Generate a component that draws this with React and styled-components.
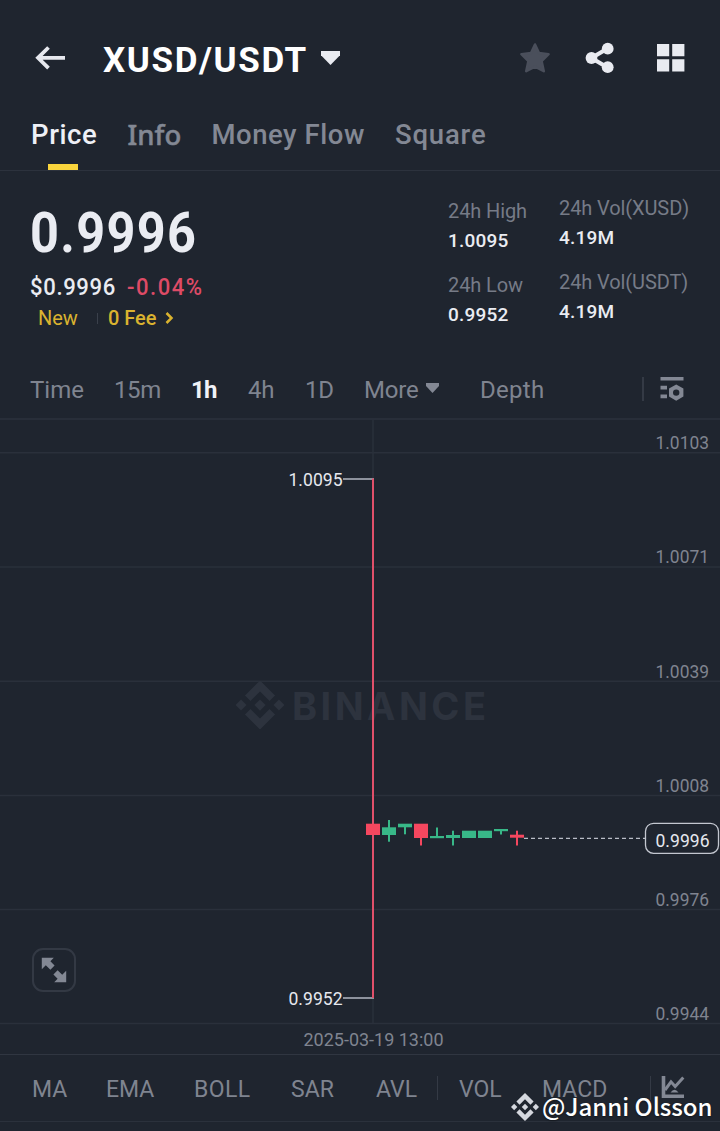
import React, { useState } from "react";
import styled, { createGlobalStyle } from "styled-components";

const GlobalStyle = createGlobalStyle`
  * {
    box-sizing: border-box;
  }
  body {
    margin: 0;
    background: #1f252f;
    font-family: Roboto, "Liberation Sans", sans-serif;
  }
  svg {
    display: block;
  }
`;

const Screen = styled.main`
  position: relative;
  width: 720px;
  height: 1131px;
  overflow: hidden;
  background: #1f252f;
  color: #eaecf2;
`;

const Header = styled.header`
  display: flex;
  align-items: center;
  height: 116px;
  padding: 0 35px 0 34px;
`;

const Pair = styled.h1`
  flex: 1;
  display: flex;
  align-items: center;
  gap: 13px;
  margin: 0;
  padding: 5px 0 0 37px;
  color: #fff;
  font-size: 35px;
  font-weight: 700;
  line-height: 40px;
  letter-spacing: 1.6px;

  svg {
    margin-top: -5px;
  }
`;

const HeaderIcons = styled.div`
  display: flex;
  align-items: center;
  gap: 34px;

  svg:last-child {
    margin-left: 8px;
  }
`;

const Tabs = styled.nav`
  display: flex;
  gap: 30px;
  height: 55px;
  padding-left: 31px;
  border-bottom: 1px solid #2c323d;
`;

const Tab = styled.a`
  position: relative;
  padding-top: 1px;
  font-family: ${(p) => (p.$slab ? '"Noto Sans", sans-serif' : "inherit")};
  font-size: 27.5px;
  font-weight: 500;
  line-height: 36px;
  letter-spacing: ${(p) => p.$track}px;
  color: ${(p) => (p.$active ? "#eef0f6" : "#838894")};
  -webkit-text-stroke: ${(p) => (p.$slab ? "0.5px" : "0")};

  &::after {
    content: "";
    display: ${(p) => (p.$active ? "block" : "none")};
    position: absolute;
    left: 17px;
    bottom: 0;
    width: 30px;
    height: 6px;
    background: #f9d43c;
  }
`;

const Summary = styled.section`
  display: flex;
  height: 189px;
`;

const PriceColumn = styled.div`
  width: 448px;
  padding: 32px 0 0 30px;
`;

const LastPrice = styled.div`
  font-size: 56px;
  font-weight: 700;
  line-height: 60px;
  letter-spacing: 1.5px;
  transform: scaleX(0.9);
  transform-origin: left;
`;

const Change = styled.div`
  display: flex;
  gap: 12px;
  margin-top: 8px;
  font-size: 24px;
  font-weight: 500;
  line-height: 32px;
  letter-spacing: 0.7px;
  transform: scaleX(0.92);
  transform-origin: left;

  em {
    font-style: normal;
    letter-spacing: 1.65px;
    color: #dd4b66;
  }
`;

const Tags = styled.div`
  display: flex;
  align-items: center;
  margin-top: 2px;
  padding-left: 8px;
  font-size: 20px;
  line-height: 26px;
  color: #dab32f;

  i {
    width: 1px;
    height: 11px;
    margin: 0 10px 0 19px;
    background: #3a404b;
  }
  b {
    margin-right: 9px;
    font-weight: 500;
  }
`;

const StatColumn = styled.dl`
  width: 111px;
  margin: 0;
  padding-top: ${(p) => p.$top}px;
  white-space: nowrap;
`;

const StatName = styled.dt`
  font-size: 20px;
  line-height: 24px;
  letter-spacing: -0.1px;
  color: #767b87;
`;

const StatValue = styled.dd`
  margin: 6px 0 20px;
  font-size: 19px;
  font-weight: 500;
  line-height: 24px;
  letter-spacing: 0.2px;
`;

const Intervals = styled.nav`
  display: grid;
  grid-template-columns: 84px 77px 57px 57px 59px 116px 162px 18px 26px;
  align-items: center;
  height: 60px;
  padding-left: 30px;
  border-bottom: 2px solid #282e39;
`;

const Interval = styled.a`
  display: flex;
  align-items: center;
  gap: 8px;
  padding-top: 1px;
  font-size: 24px;
  font-weight: ${(p) => (p.$active ? 700 : 400)};
  line-height: 30px;
  letter-spacing: ${(p) => p.$track || 0}px;
  color: ${(p) => (p.$active ? "#f0f2f7" : "#7f8490")};
  cursor: pointer;

  svg {
    margin-top: -4px;
  }
`;

const Divider = styled.span`
  width: ${(p) => p.$w || 1}px;
  height: 24px;
  background: #343a45;
`;

const ChartArea = styled.section`
  position: relative;
  height: 635px;
  border-bottom: 1px solid #303641;

  text {
    font-size: 18px;
  }
`;

const WatermarkText = styled.text`
  && {
    font-family: Inter, sans-serif;
    font-size: 38px;
    font-weight: 700;
  }
`;

const ExpandButton = styled.button`
  position: absolute;
  left: 32px;
  top: 528px;
  display: grid;
  place-items: center;
  width: 44px;
  height: 44px;
  padding: 0;
  border: 2px solid #333944;
  border-radius: 11px;
  background: transparent;
`;

const Indicators = styled.nav`
  display: grid;
  grid-template-columns: 74px 88px 97px 85px 61px 22px 83px 108px 11px 26px;
  align-items: center;
  height: 67px;
  padding-left: 32px;
  border-bottom: 1px solid #2b313c;
`;

const Indicator = styled.a`
  padding-top: 4px;
  font-size: 23px;
  line-height: 30px;
  letter-spacing: ${(p) => p.$track || 0}px;
  color: #7f8490;
`;

const Signature = styled.div`
  position: absolute;
  left: 511px;
  top: 1088px;
  display: flex;
  align-items: center;
  gap: 3px;
  height: 38px;
  color: #fff;
  font-family: "Noto Sans CJK JP", "Noto Sans", sans-serif;
  font-size: 24px;
  font-weight: 500;
  line-height: 36px;
  white-space: nowrap;
  text-shadow: 0 1px 2px rgba(0, 0, 0, 0.4);

  span {
    height: 38px;
  }
`;

const BinanceMark = ({ size, color, ...rest }) => (
  <svg width={size} height={size} viewBox="0 0 126.61 126.61" fill={color} {...rest}>
    <path d="M38.73 53.2l24.59-24.58 24.6 24.6 14.3-14.31L63.32 0l-38.9 38.9z" />
    <path d="M0 63.31l14.3-14.31 14.31 14.31-14.31 14.3z" />
    <path d="M38.73 73.41l24.59 24.59 24.6-24.6 14.31 14.29-38.9 38.91-38.91-38.88z" />
    <path d="M98 63.31l14.3-14.31 14.31 14.3-14.31 14.32z" />
    <path d="M77.83 63.3L63.32 48.78 48.7 63.3l14.62 14.62z" />
  </svg>
);

const BackIcon = () => (
  <svg width="32" height="26" viewBox="0 0 32 26" fill="none" stroke="#e6e8ee" strokeWidth="3.8">
    <path d="M14.5 2.5L4 12.8l10.5 10.3M4.5 12.8H31" />
  </svg>
);

const Caret = ({ width, height, color }) => (
  <svg width={width} height={height} viewBox="0 0 18 14" preserveAspectRatio="none" fill={color}>
    <path d="M0 0h18v4.2L9 14 0 4.2z" />
  </svg>
);

const StarIcon = () => (
  <svg width="32" height="32" viewBox="0 0 32 32" fill="#4a4f5b" stroke="#4a4f5b" strokeWidth="2.5" strokeLinejoin="round">
    <path d="M16 2.5l4 8.5 9.6 1.200-7 6.800 2.200 10.200L16 24.600l-8.800 4.600 2.200-10.200-7-6.800L12 11z" />
  </svg>
);

const ShareIcon = () => (
  <svg width="30" height="32" viewBox="0 0 30 32" fill="#e9ebf1">
    <path d="M22.5 6.5L6.5 16l16 9.5" fill="none" stroke="#e9ebf1" strokeWidth="4.2" />
    <circle cx="22.7" cy="6.7" r="5.9" />
    <circle cx="6.5" cy="16" r="5.9" />
    <circle cx="22.7" cy="25.2" r="5.9" />
  </svg>
);

const GridIcon = () => (
  <svg width="28" height="28" viewBox="0 0 28 28" fill="#e9ebf1">
    <path d="M0 0h12.2v12.2H0zM15.2 0h12.2v12.2H15.2zM0 15.3h12.2v12.2H0zM15.2 15.3h12.2v12.2H15.2z" />
  </svg>
);

const SettingsIcon = () => (
  <svg width="24" height="24" viewBox="0 0 24 24" fill="#838894">
    <path d="M.5 0h23v3.6H.5zM.5 8.8H7v3.6H.5zM.5 17.6H7v3.6H.5z" />
    <path
      fillRule="evenodd"
      d="M16.2 7.5l7.2 4.1v8L16.2 23.7 9 19.6v-8zM16.2 12.4a3.2 3.2 0 1 0 0 6.400 3.2 3.2 0 0 0 0-6.400z"
    />
  </svg>
);

const IndicatorIcon = () => (
  <svg width="24" height="24" viewBox="0 0 24 24" fill="none" stroke="#838894">
    <path d="M2.5 0v20.2H23" strokeWidth="3.6" />
    <path d="M4 14l6-8.200 4.200 4.700L22.300 1.500" strokeWidth="3" />
    <path d="M9.500 16.500q4-5.500 8 0z" fill="#838894" stroke="none" />
  </svg>
);

const ExpandIcon = () => (
  <svg width="26" height="26" viewBox="0 0 26 26" fill="#838894">
    <path d="M.8.8h12L9.400 4.200l4.200 4.200-4.200 4.400-4.600-4.600-4 4z" />
    <path d="M25.200 25.200h-12l3.400-3.400-4.200-4.200 4.200-4.400 4.600 4.600 4-4z" />
  </svg>
);

const GREEN = "#38b888";
const RED = "#f5475f";

// wick and body bounds are y values on the chart canvas
const candles = [
  { x: 389, wick: [400, 421.7], body: [407.3, 415], up: true },
  { x: 405, wick: [404, 414.3], body: [403.7, 407.3], up: true },
  { x: 421, wick: [404, 425.5], body: [403.7, 418] },
  { x: 437, wick: [407.5, 418], body: [416, 418.2], up: true },
  { x: 453, wick: [410.7, 425.5], body: [415, 418], up: true },
  { x: 469, wick: [411, 418], body: [410.7, 418], up: true },
  { x: 485, wick: [411, 418], body: [410.7, 418], up: true },
  { x: 501, wick: [409, 414.5], body: [409, 411.2], up: true },
  { x: 517, wick: [410.7, 425.5], body: [414.7, 417.7] },
];

const levels = [
  { y: 32.8, label: "1.0103" },
  { y: 147, label: "1.0071" },
  { y: 261.2, label: "1.0039" },
  { y: 375.4, label: "1.0008" },
  { y: 489.5, label: "0.9976" },
  { y: 603.5, label: "0.9944" },
];

const PriceChart = () => (
  <svg width="720" height="634" viewBox="0 0 720 634">
    <g stroke="#2a303b" strokeWidth="1.5">
      {levels.map((l) => (
        <path key={l.label} d={`M0 ${l.y}H720`} />
      ))}
      <path d="M373 0V603" />
    </g>
    <g fill="#7f8490">
      {levels.map((l) => (
        <text key={l.label} x="655.5" y={l.y - 3.7} textLength="53.5" lengthAdjust="spacingAndGlyphs">
          {l.label}
        </text>
      ))}
      <text x="303.5" y="626" textLength="140" lengthAdjust="spacingAndGlyphs">
        2025-03-19 13:00
      </text>
    </g>

    <BinanceMark x="235.500" y="260.500" size={49} color="#2d333e" />
    <WatermarkText x="292" y="299.500" fill="#2d333e" textLength="194">
      BINANCE
    </WatermarkText>

    <g fill="#e6e8ee">
      <text x="288.5" y="66" textLength="54" lengthAdjust="spacingAndGlyphs">
        1.0095
      </text>
      <text x="288.5" y="585" textLength="54" lengthAdjust="spacingAndGlyphs">
        0.9952
      </text>
    </g>
    <path d="M343 59H374M343 578H374" stroke="#8d929d" strokeWidth="2" />

    <path d="M373 58.5V578" stroke="#e0506a" strokeWidth="2" />
    <rect x="366" y="403.7" width="14" height="11.3" fill={RED} />
    {candles.map((c) => (
      <g key={c.x} fill={c.up ? GREEN : RED}>
        <rect x={c.x - 1} y={c.wick[0]} width="2" height={c.wick[1] - c.wick[0]} />
        <rect x={c.x - 7} y={c.body[0]} width="14" height={c.body[1] - c.body[0]} />
      </g>
    ))}

    <path d="M524 418.3H645" stroke="#b9bdc7" strokeWidth="1.3" strokeDasharray="4 3" />
    <rect x="645.5" y="403.3" width="73" height="30" rx="8" fill="#1f252f" stroke="#c3c7d0" strokeWidth="1.3" />
    <text x="655.5" y="427" fill="#e6e8ee" textLength="54" lengthAdjust="spacingAndGlyphs">
      0.9996
    </text>
  </svg>
);

const tabs = [
  { name: "Price", track: 0.6 },
  { name: "Info", track: 0.1, slab: true },
  { name: "Money Flow", track: 0.55 },
  { name: "Square", track: 0.85 },
];

const stats = [
  { top: 28, rows: [["24h High", "1.0095"], ["24h Low", "0.9952"]] },
  { top: 25, rows: [["24h Vol(XUSD)", "4.19M"], ["24h Vol(USDT)", "4.19M"]] },
];

const intervals = [
  { name: "Time" },
  { name: "15m", track: -0.4 },
  { name: "1h", track: -0.8 },
  { name: "4h", track: -0.3 },
  { name: "1D", track: -0.3 },
  { name: "More", track: -0.2 },
  { name: "Depth", track: 0.3 },
];

const overlays = [
  { name: "MA" },
  { name: "EMA" },
  { name: "BOLL", track: 0.4 },
  { name: "SAR" },
  { name: "AVL" },
];

const App = () => {
  const [tab, setTab] = useState("Price");
  const [interval, setInterval] = useState("1h");

  return (
    <>
      <GlobalStyle />
      <Screen>
        <Header>
          <BackIcon />
          <Pair>
            XUSD/USDT
            <Caret width={19} height={14} color="#e9ebf1" />
          </Pair>
          <HeaderIcons>
            <StarIcon />
            <ShareIcon />
            <GridIcon />
          </HeaderIcons>
        </Header>

        <Tabs>
          {tabs.map((t) => (
            <Tab
              key={t.name}
              $track={t.track}
              $slab={t.slab}
              $active={t.name === tab}
              onClick={() => setTab(t.name)}
            >
              {t.name}
            </Tab>
          ))}
        </Tabs>

        <Summary>
          <PriceColumn>
            <LastPrice>0.9996</LastPrice>
            <Change>
              $0.9996 <em>-0.04%</em>
            </Change>
            <Tags>
              New
              <i />
              <b>0 Fee</b>
              <svg width="9" height="12" viewBox="0 0 9 12" fill="none" stroke="#dab32f" strokeWidth="2.5">
                <path d="M1.5 1L6.5 6l-5 5" />
              </svg>
            </Tags>
          </PriceColumn>
          {stats.map((s) => (
            <StatColumn key={s.top} $top={s.top}>
              {s.rows.map(([name, value]) => (
                <React.Fragment key={name}>
                  <StatName>{name}</StatName>
                  <StatValue>{value}</StatValue>
                </React.Fragment>
              ))}
            </StatColumn>
          ))}
        </Summary>

        <Intervals>
          {intervals.map(({ name, track }) => (
            <Interval key={name} $track={track} $active={name === interval} onClick={() => setInterval(name)}>
              {name}
              {name === "More" && <Caret width={13} height={10} color="#838894" />}
            </Interval>
          ))}
          <Divider $w={2} />
          <SettingsIcon />
        </Intervals>

        <ChartArea>
          <PriceChart />
          <ExpandButton>
            <ExpandIcon />
          </ExpandButton>
        </ChartArea>

        <Indicators>
          {overlays.map(({ name, track }) => (
            <Indicator key={name} $track={track}>
              {name}
            </Indicator>
          ))}
          <Divider />
          <Indicator>VOL</Indicator>
          <Indicator>MACD</Indicator>
          <Divider />
          <IndicatorIcon />
        </Indicators>

        <Signature>
          <BinanceMark size={28} color="#d5d8df" />
          <span>@Janni Olsson</span>
        </Signature>
      </Screen>
    </>
  );
};

export default App;
